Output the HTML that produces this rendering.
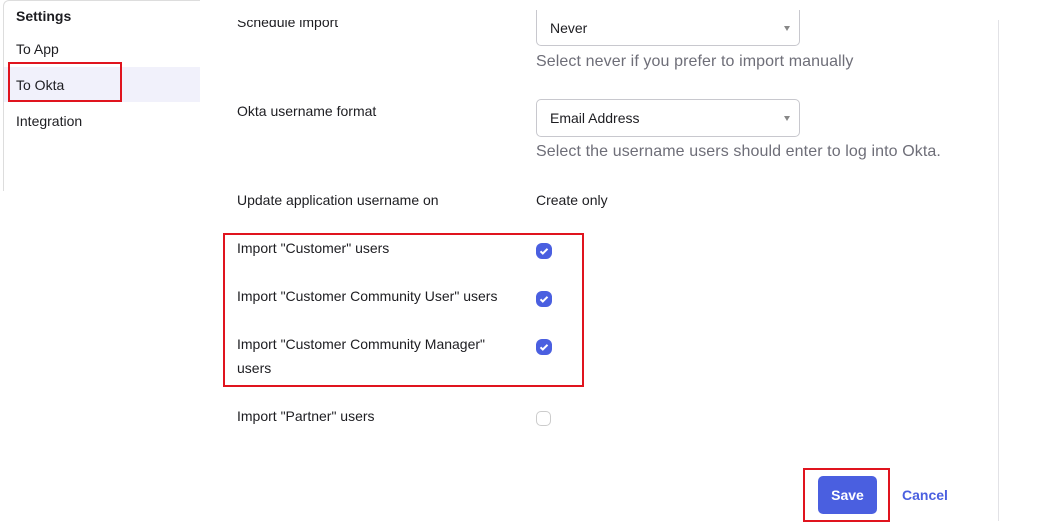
<!DOCTYPE html>
<html><head><style>
body{margin:0;width:1043px;height:521px;background:#fff;font-family:"Liberation Sans",sans-serif;position:relative;overflow:hidden;color:#1d1d21}
.a{position:absolute}
.t{font-size:14px;white-space:nowrap}
.sel{position:absolute;left:536px;width:262px;border:1px solid #c8c8ce;border-radius:5px;background:#fff}
.sel span{position:absolute;left:13px;font-size:14px}
.sel i{position:absolute;right:9px;width:0;height:0;border-left:3.5px solid transparent;border-right:3.5px solid transparent;border-top:5px solid #888}
.hint{font-size:16px;color:#6e6e78;letter-spacing:0.1px}
.cb{position:absolute;left:536px;width:16px;height:16px;border-radius:6px;background:#4a5fe0}
.red{position:absolute;border:2px solid #e0141e}
</style></head><body>
<div class="a" style="left:3px;top:0;width:197px;height:190px;border-left:1px solid #ddd;border-top:1px solid #ddd;border-top-left-radius:6px"></div>
<div class="a" style="left:4px;top:67px;width:196px;height:35px;background:#f1f1fb"></div>
<div class="a t" style="left:16px;top:8px;font-weight:bold;color:#1d1d21">Settings</div>
<div class="a t" style="left:16px;top:41px">To App</div>
<div class="a t" style="left:16px;top:77px">To Okta</div>
<div class="a t" style="left:16px;top:113px">Integration</div>
<div class="red" style="left:8px;top:62px;width:110px;height:36px"></div>

<div class="a" style="left:998px;top:20px;width:1px;height:501px;background:#e2e2e6"></div>

<div class="a t" style="left:237px;top:14px">Schedule import</div>
<div class="a" style="left:200px;top:0;width:798px;height:20px;background:#fff"></div>
<div class="sel" style="top:10px;height:35px;border-top:none;border-top-left-radius:0;border-top-right-radius:0"><span style="top:10px">Never</span><i style="top:16px"></i></div>
<div class="a hint" style="left:536px;top:53px">Select never if you prefer to import manually</div>

<div class="a t" style="left:237px;top:103px">Okta username format</div>
<div class="sel" style="top:99px;height:36px"><span style="top:10px">Email Address</span><i style="top:16px"></i></div>
<div class="a hint" style="left:536px;top:143px">Select the username users should enter to log into Okta.</div>

<div class="a t" style="left:237px;top:192px">Update application username on</div>
<div class="a t" style="left:536px;top:192px">Create only</div>

<div class="a t" style="left:237px;top:240px">Import "Customer" users</div>
<div class="a t" style="left:237px;top:288px">Import "Customer Community User" users</div>
<div class="a t" style="left:237px;line-height:24px;white-space:normal;width:280px;top:332px">Import "Customer Community Manager" users</div>
<div class="a t" style="left:237px;top:408px">Import "Partner" users</div>
<div class="cb" style="top:243px"><svg width="16" height="16"><path d="M4.5 8.3l2.3 2.2 4.7-4.7" stroke="#fff" stroke-width="2" fill="none"/></svg></div>
<div class="cb" style="top:291px"><svg width="16" height="16"><path d="M4.5 8.3l2.3 2.2 4.7-4.7" stroke="#fff" stroke-width="2" fill="none"/></svg></div>
<div class="cb" style="top:339px"><svg width="16" height="16"><path d="M4.5 8.3l2.3 2.2 4.7-4.7" stroke="#fff" stroke-width="2" fill="none"/></svg></div>
<div class="cb" style="top:411px;background:#fff;border:1.5px solid #ccc;width:13px;height:13px;border-radius:5px"></div>
<div class="red" style="left:223px;top:233px;width:357px;height:150px"></div>

<div class="a" style="left:818px;top:476px;width:59px;height:38px;background:#4a5fe0;border-radius:5px;color:#fff;font-weight:bold;font-size:14px;text-align:center;line-height:38px">Save</div>
<div class="red" style="left:803px;top:468px;width:83px;height:50px"></div>
<div class="a t" style="left:902px;top:487px;color:#4a5fe0;font-weight:bold">Cancel</div>
</body></html>
